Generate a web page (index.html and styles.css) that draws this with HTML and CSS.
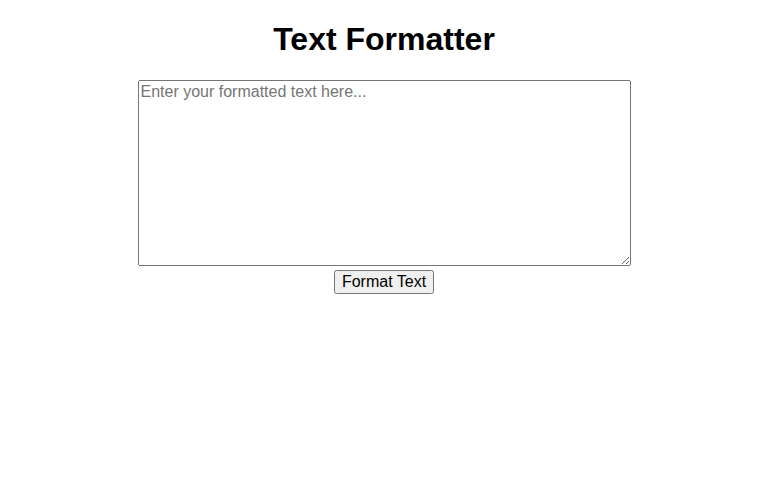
FILE: index.html
```html
<!DOCTYPE html>
<html lang="en">
<head>
  <meta charset="UTF-8" />
  <meta name="viewport" content="width=device-width, initial-scale=1.0"/>
  <title>Text Formatter</title>
  <link rel="stylesheet" href="styles.css">
</head>
<body>

  <h1>Text Formatter</h1>

  <div class="editor">
    <textarea id="input" placeholder="Enter your formatted text here..."></textarea>
    <br>
    <button onclick="formatText()">Format Text</button>
  </div>

  <script>
    function formatText() {
      const input = document.getElementById('input');
      input.value = input.value.trim().replace(/\s+\n/g, '\n');
    }
  </script>

</body>
</html>
```

FILE: styles.css
```css
body {
  font-family: "Liberation Sans", Arial, sans-serif;
  background-color: white;
  margin: 0;
}

h1 {
  text-align: center;
  font-size: 32px;
}

.editor {
  text-align: center;
}

textarea {
  width: 493px;
  height: 186px;
  box-sizing: border-box;
  font-family: "Liberation Sans", Arial, sans-serif;
  font-size: 16px;
}

button {
  font-family: "Liberation Sans", Arial, sans-serif;
  font-size: 16px;
}
```
